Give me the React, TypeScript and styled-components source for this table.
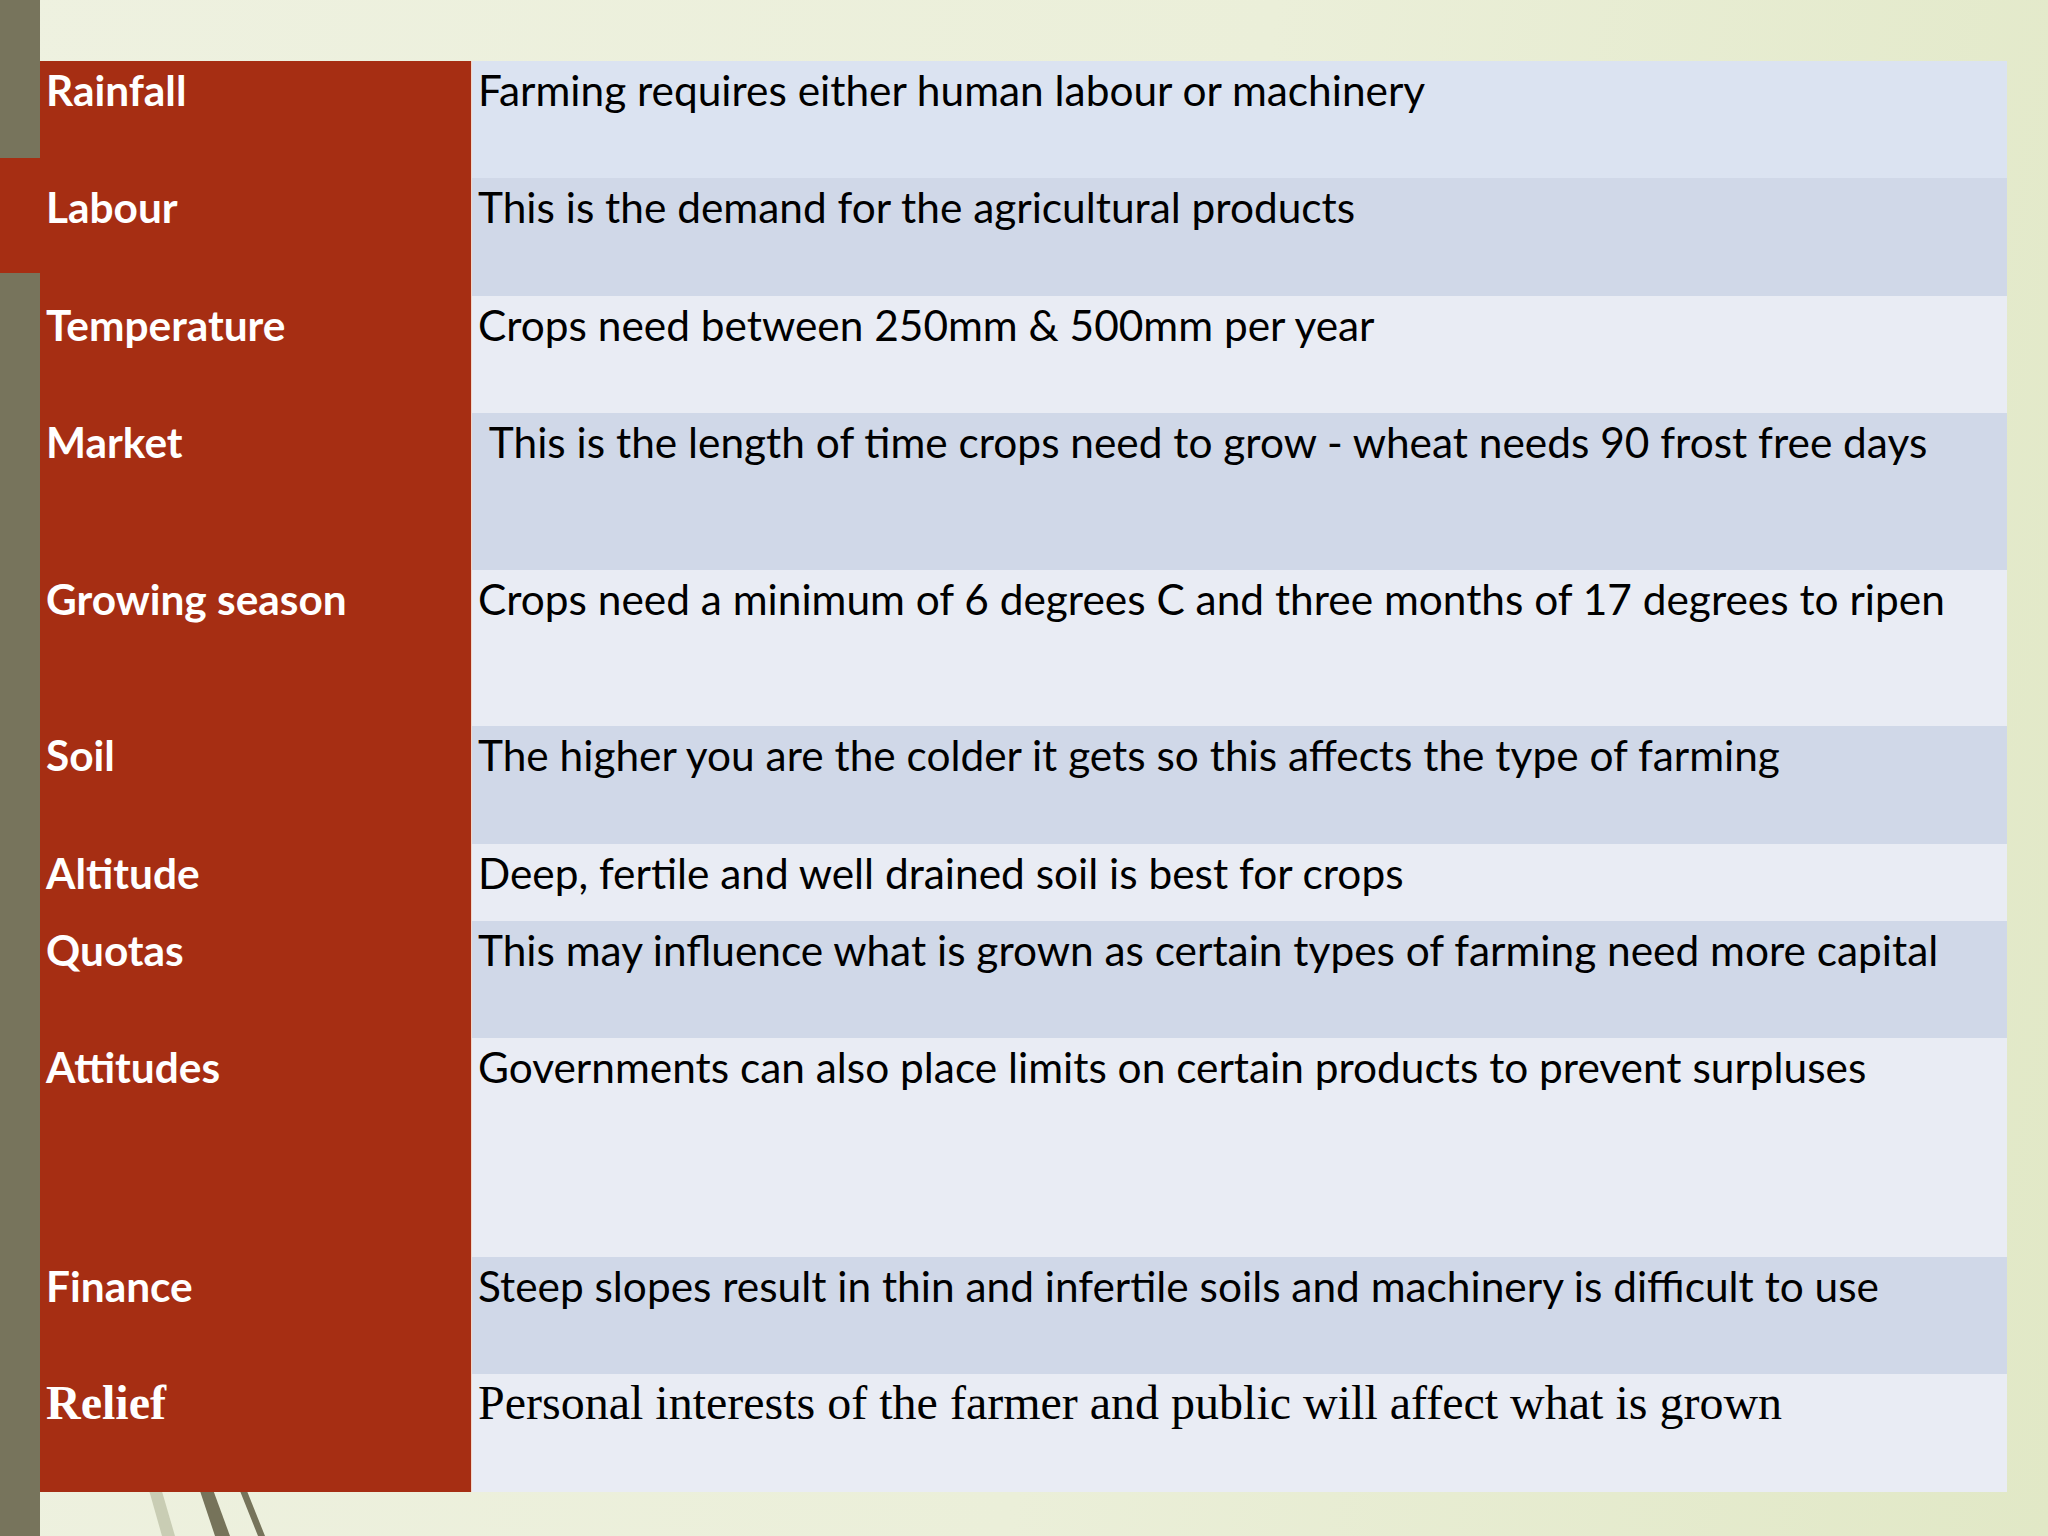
import React from 'react';
import styled, { createGlobalStyle } from 'styled-components';

const GlobalStyle = createGlobalStyle`
  html, body {
    margin: 0;
    padding: 0;
  }
  body {
    font-family: 'Lato', 'Open Sans', sans-serif;
  }
`;

const Slide = styled.div`
  position: relative;
  width: 2048px;
  height: 1536px;
  overflow: hidden;
  display: flex;
  background: linear-gradient(100deg, #eef1e0 0%, #ebefd9 55%, #e1e8c6 100%);
`;

const SideBar = styled.div`
  width: 40px;
  flex-shrink: 0;
  display: flex;
  flex-direction: column;
  z-index: 1;
`;

const SideSegment = styled.div<{ $h?: number; $tab?: boolean }>`
  height: ${(p) => (p.$h ? `${p.$h}px` : 'auto')};
  flex: ${(p) => (p.$h ? '0 0 auto' : '1')};
  background: ${(p) => (p.$tab ? '#a62e13' : '#77745c')};
`;

const Main = styled.div`
  flex: 1;
  padding-top: 61px;
  z-index: 1;
`;

const Table = styled.div`
  width: 1967px;
  display: flex;
  flex-direction: column;
`;

const Row = styled.div<{ $h: number }>`
  display: grid;
  grid-template-columns: 432px 1fr;
  height: ${(p) => p.$h}px;
`;

const Label = styled.div<{ $serif?: boolean }>`
  background: #a62e13;
  color: #ffffff;
  font-family: ${(p) => (p.$serif ? "'Liberation Serif', serif" : "'Lato', sans-serif")};
  font-weight: 700;
  font-size: ${(p) => (p.$serif ? '48px' : '42.4px')};
  line-height: 48px;
  padding: 5px 6px 0;
  border-right: 1px solid #f1d6c8;
`;

const Cell = styled.div<{ $bg: string; $serif?: boolean }>`
  background: ${(p) => p.$bg};
  color: #000000;
  font-family: ${(p) => (p.$serif ? "'Liberation Serif', serif" : "'Lato', sans-serif")};
  font-size: ${(p) => (p.$serif ? '48px' : '42.4px')};
  line-height: 48px;
  padding: 5px 6px 0;
  white-space: pre-wrap;
`;

const Strokes = styled.svg`
  position: absolute;
  left: 0;
  bottom: 0;
  z-index: 0;
`;

const HEAD = '#dbe3f1';
const DARK = '#d0d8e8';
const LIGHT = '#e9ecf4';

const rows = [
  { label: 'Rainfall', text: 'Farming requires either human labour or machinery', h: 117, bg: HEAD },
  { label: 'Labour', text: 'This is the demand for the agricultural products', h: 118, bg: DARK },
  { label: 'Temperature', text: 'Crops need between 250mm & 500mm per year', h: 117, bg: LIGHT },
  { label: 'Market', text: ' This is the length of time crops need to grow - wheat needs 90 frost free days', h: 157, bg: DARK },
  { label: 'Growing season', text: 'Crops need a minimum of 6 degrees C and three months of 17 degrees to ripen', h: 156, bg: LIGHT },
  { label: 'Soil', text: 'The higher you are the colder it gets so this affects the type of farming', h: 118, bg: DARK },
  { label: 'Altitude', text: 'Deep, fertile and well drained soil is best for crops', h: 77, bg: LIGHT },
  { label: 'Quotas', text: 'This may influence what is grown as certain types of farming need more capital', h: 117, bg: DARK },
  { label: 'Attitudes', text: 'Governments can also place limits on certain products to prevent surpluses', h: 219, bg: LIGHT },
  { label: 'Finance', text: 'Steep slopes result in thin and infertile soils and machinery is difficult to use', h: 117, bg: DARK },
  { label: 'Relief', text: 'Personal interests of the farmer and public will affect what is grown', h: 118, bg: LIGHT, serif: true },
];

export default function App() {
  return (
    <>
      <GlobalStyle />
      <Slide>
        <Strokes width="320" height="120" viewBox="0 1416 320 120">
          <polygon points="128,1416 140,1416 175,1536 162,1536" fill="#c9cdb4" />
          <polygon points="175,1416 186,1416 230,1536 215,1536" fill="#76735a" />
          <polygon points="210,1416 217,1416 265,1536 258,1536" fill="#76735a" />
        </Strokes>
        <SideBar>
          <SideSegment $h={158} />
          <SideSegment $h={115} $tab />
          <SideSegment />
        </SideBar>
        <Main>
          <Table>
            {rows.map((r) => (
              <Row key={r.label} $h={r.h}>
                <Label $serif={r.serif}>{r.label}</Label>
                <Cell $bg={r.bg} $serif={r.serif}>{r.text}</Cell>
              </Row>
            ))}
          </Table>
        </Main>
      </Slide>
    </>
  );
}
